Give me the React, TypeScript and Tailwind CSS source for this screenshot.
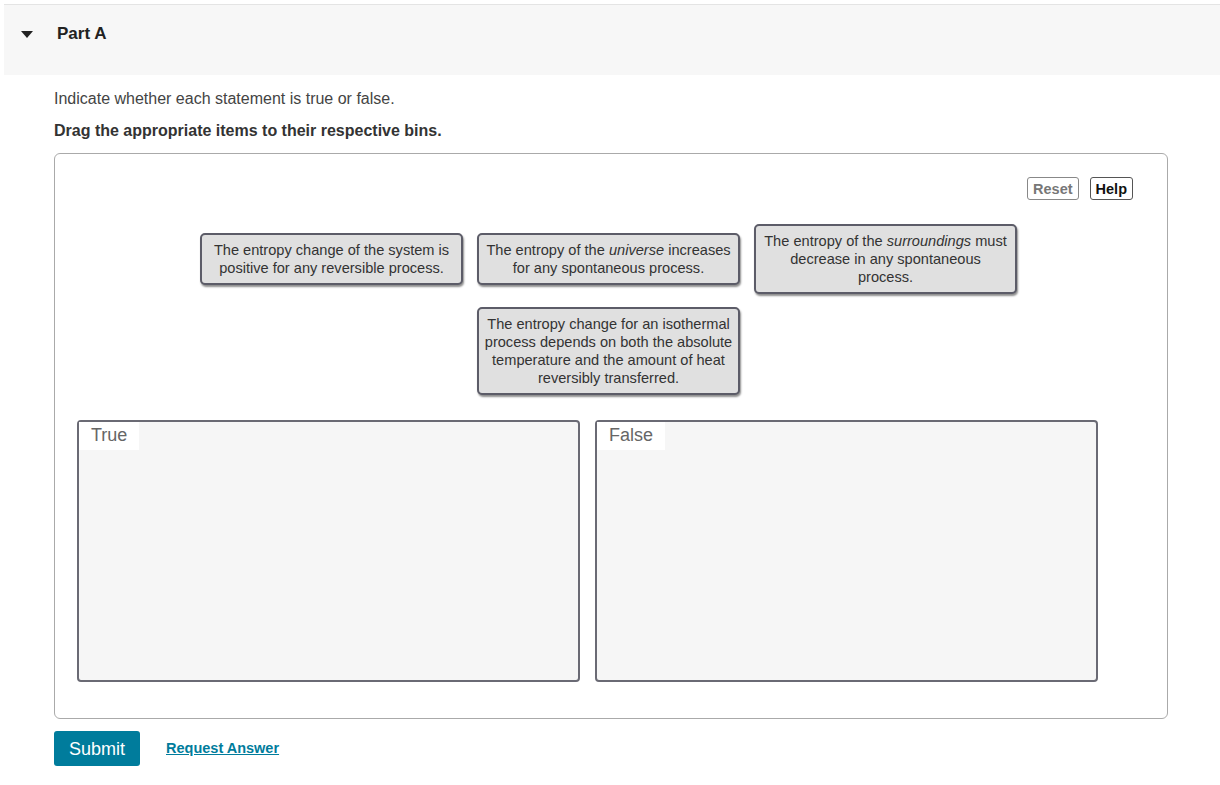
import React from "react";

const cards: { id: number; lines: React.ReactNode[] }[] = [
  { id: 1, lines: ["The entropy change of the system is", "positive for any reversible process."] },
  { id: 2, lines: [<>The entropy of the <i>universe</i> increases</>, "for any spontaneous process."] },
  { id: 3, lines: [<>The entropy of the <i>surroundings</i> must</>, "decrease in any spontaneous", "process."] },
  {
    id: 4,
    lines: [
      "The entropy change for an isothermal",
      "process depends on both the absolute",
      "temperature and the amount of heat",
      "reversibly transferred.",
    ],
  },
];

const Card = ({ lines }: { lines: React.ReactNode[] }) => (
  <div className="w-[263px] rounded-[5px] border-2 border-[#5c5c68] bg-[#e0e0e0] px-[2px] py-[6px] text-center text-[14.6px] leading-[18px] text-[#333] shadow-[1px_2px_2px_rgba(0,0,0,0.45)]">
    {lines.map((l, i) => (
      <div key={i} className="whitespace-nowrap">
        {l}
      </div>
    ))}
  </div>
);

const Bin = ({ label }: { label: string }) => (
  <div className="h-[262px] w-[503px] rounded-[4px] border-2 border-[#6a6a74] bg-[#f6f6f6]">
    <div className="inline-block bg-white px-[12px] pt-[2px] pb-[4px] text-[18px] leading-[22px] text-[#666]">
      {label}
    </div>
  </div>
);

export default function App() {
  return (
    <div className="min-h-screen bg-white pl-[4px] pt-[4px] font-['Liberation_Sans',Arial,sans-serif]">
      {/* header */}
      <div className="flex h-[71px] items-start border-t border-[#e4e4e4] bg-[#f7f7f7] pt-[19px]">
        <svg width="12" height="7" viewBox="0 0 12 7" className="ml-[17px] mt-[7px]">
          <path d="M0 0 L12 0 L6 7 Z" fill="#222" />
        </svg>
        <span className="ml-[24px] text-[17px] font-bold leading-[20px] text-[#222]">Part A</span>
      </div>

      <div className="pl-[50px] pr-[52px]">
        <p className="mt-[14px] text-[16px] leading-[20px] text-[#444]">
          Indicate whether each statement is true or false.
        </p>
        <p className="mt-[12px] text-[16px] font-bold leading-[20px] text-[#333]">
          Drag the appropriate items to their respective bins.
        </p>

        <div className="mt-[12px] h-[566px] rounded-[6px] border border-[#aaa]">
          <div className="mr-[34px] mt-[23px] flex justify-end gap-[11px]">
            <button className="h-[23px] rounded-[3px] border border-[#888] px-[5px] text-[14.5px] font-bold leading-[20px] text-[#777]">
              Reset
            </button>
            <button className="h-[23px] rounded-[3px] border border-[#555] px-[5px] text-[14.5px] font-bold leading-[20px] text-[#111]">
              Help
            </button>
          </div>

          <div className="ml-[145px] mt-[24px] flex w-[817px] flex-wrap items-center justify-center gap-x-[14px] gap-y-[13px]">
            {cards.map((c) => (
              <Card key={c.id} lines={c.lines} />
            ))}
          </div>

          <div className="ml-[22px] mt-[25px] flex gap-[15px]">
            <Bin label="True" />
            <Bin label="False" />
          </div>
        </div>

        <div className="mt-[12px] flex items-center">
          <button className="h-[35px] w-[86px] rounded-[3px] bg-[#007c9c] text-[18px] leading-[22px] text-white">
            Submit
          </button>
          <a href="#" className="ml-[26px] text-[14.5px] font-bold text-[#007c9c] underline">
            Request Answer
          </a>
        </div>
      </div>
    </div>
  );
}
